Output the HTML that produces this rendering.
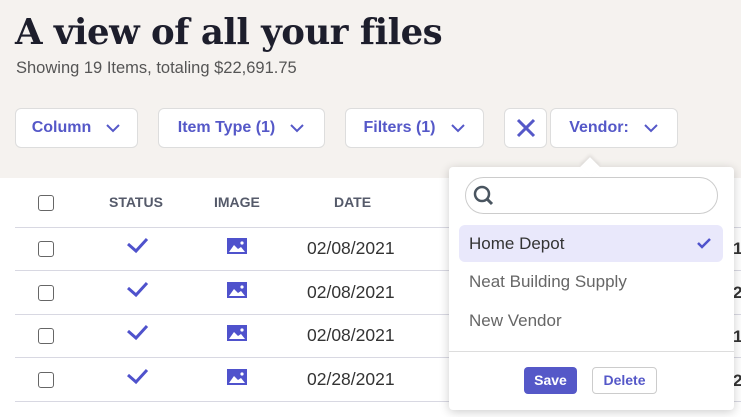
<!DOCTYPE html><html><head><style>
*{box-sizing:border-box;margin:0;padding:0}
body{width:741px;height:417px;overflow:hidden;background:#f5f2ef;font-family:"Liberation Sans",sans-serif;position:relative}
.a{position:absolute}
h1{position:absolute;left:15px;top:12px;font-family:"DejaVu Serif",serif;font-weight:bold;font-size:35.5px;color:#1d1e2c;letter-spacing:-0.5px;white-space:nowrap}
.sub{left:16px;top:59px;font-size:16.5px;color:#555}
.btn{position:absolute;top:108px;height:40px;background:#fff;border:1px solid #ddd;border-radius:6px;color:#5558c8;font-weight:bold;font-size:16px;display:flex;align-items:center;justify-content:center;gap:14px}
.tbl{left:0;top:178px;width:741px;height:239px;background:#fff}
.line{position:absolute;left:15px;width:726px;height:1px;background:#d8d8e2}
.cb{position:absolute;left:38px;width:16px;height:16px;border:1.5px solid #666;border-radius:3px}
.th{position:absolute;top:194px;font-size:14px;font-weight:bold;color:#555a6a}
.date{position:absolute;left:307px;font-size:17.5px;color:#333}
.dd{left:449px;top:167px;width:285px;height:243px;background:#fff;border-radius:4px;box-shadow:0 2px 10px rgba(0,0,0,.2)}
.it{position:absolute;left:469px;font-size:17px;color:#666}
</style></head><body>
<h1>A view of all your files</h1>
<div class="a sub">Showing 19 Items, totaling $22,691.75</div>
<div class="btn" style="left:15px;width:123px">Column <svg width="16" height="10"><path d="M2 2l6 6 6-6" fill="none" stroke="#5558c8" stroke-width="2"/></svg></div>
<div class="btn" style="left:158px;width:167px">Item Type (1) <svg width="16" height="10"><path d="M2 2l6 6 6-6" fill="none" stroke="#5558c8" stroke-width="2"/></svg></div>
<div class="btn" style="left:345px;width:139px">Filters (1) <svg width="16" height="10"><path d="M2 2l6 6 6-6" fill="none" stroke="#5558c8" stroke-width="2"/></svg></div>
<div class="btn" style="left:504px;width:43px"><svg width="20" height="20"><path d="M2 2l16 16M18 2L2 18" stroke="#5558c8" stroke-width="3"/></svg></div>
<div class="btn" style="left:550px;width:128px">Vendor: <svg width="16" height="10"><path d="M2 2l6 6 6-6" fill="none" stroke="#5558c8" stroke-width="2"/></svg></div>
<div class="a tbl"></div>
<div class="cb" style="top:195px"></div>
<div class="th" style="left:109px">STATUS</div><div class="th" style="left:214px">IMAGE</div><div class="th" style="left:334px">DATE</div>
<div class="line" style="top:227px"></div><div class="line" style="top:270px"></div><div class="line" style="top:314px"></div><div class="line" style="top:357px"></div><div class="line" style="top:401px"></div>
<div class="cb" style="top:241px"></div><div class="cb" style="top:285px"></div><div class="cb" style="top:328px"></div><div class="cb" style="top:372px"></div>
<svg class="a" style="left:0;top:0" width="741" height="417">
<g fill="none" stroke="#4f52cc" stroke-width="3">
<path d="M128 244l8 7 11-12"/><path d="M128 288l8 7 11-12"/><path d="M128 331l8 7 11-12"/><path d="M128 375l8 7 11-12"/>
</g>
<g fill="#4f52cc">
<g transform="translate(227,238)"><rect width="20" height="16"/><path d="M2 14l5-7 4 4 3-2 4 5z" fill="#fff"/><circle cx="15" cy="5" r="1.6" fill="#fff"/></g>
<g transform="translate(227,282)"><rect width="20" height="16"/><path d="M2 14l5-7 4 4 3-2 4 5z" fill="#fff"/><circle cx="15" cy="5" r="1.6" fill="#fff"/></g>
<g transform="translate(227,325)"><rect width="20" height="16"/><path d="M2 14l5-7 4 4 3-2 4 5z" fill="#fff"/><circle cx="15" cy="5" r="1.6" fill="#fff"/></g>
<g transform="translate(227,369)"><rect width="20" height="16"/><path d="M2 14l5-7 4 4 3-2 4 5z" fill="#fff"/><circle cx="15" cy="5" r="1.6" fill="#fff"/></g>
</g></svg>
<div class="date" style="top:238px">02/08/2021</div><div class="date" style="top:282px">02/08/2021</div><div class="date" style="top:325px">02/08/2021</div><div class="date" style="top:369px">02/28/2021</div>
<div class="a" style="left:733px;top:238px;font-size:17px;font-weight:bold;color:#333;line-height:22px">10<br><br>28<br><br>10<br><br>28</div>
<div class="a dd"></div>
<div class="a" style="left:583px;top:160px;width:14px;height:14px;background:#fff;transform:rotate(45deg);box-shadow:-2px -2px 3px rgba(0,0,0,.08)"></div>
<div class="a" style="left:465px;top:177px;width:253px;height:37px;border:1.5px solid #ccc;border-radius:19px;background:#fff"></div>
<svg class="a" style="left:472px;top:184px" width="24" height="24"><circle cx="10" cy="10" r="7" fill="none" stroke="#4a5560" stroke-width="2.5"/><path d="M15 15l5 5" stroke="#4a5560" stroke-width="3"/></svg>
<div class="a" style="left:459px;top:225px;width:264px;height:37px;background:#e9e8fb;border-radius:6px"></div>
<div class="it" style="top:234px;color:#333">Home Depot</div>
<svg class="a" style="left:696px;top:236px" width="16" height="14"><path d="M2 7l4 4 8-8" fill="none" stroke="#4f52cc" stroke-width="2.5"/></svg>
<div class="it" style="top:272px">Neat Building Supply</div>
<div class="it" style="top:311px">New Vendor</div>
<div class="a" style="left:449px;top:351px;width:285px;height:1px;background:#ddd"></div>
<div class="a" style="left:524px;top:367px;width:53px;height:27px;background:#5558c8;border-radius:4px;color:#fff;font-weight:bold;font-size:14px;text-align:center;line-height:27px">Save</div>
<div class="a" style="left:592px;top:367px;width:65px;height:27px;background:#fff;border:1px solid #ccc;border-radius:4px;color:#5558c8;font-weight:bold;font-size:14px;text-align:center;line-height:25px">Delete</div>
</body></html>
